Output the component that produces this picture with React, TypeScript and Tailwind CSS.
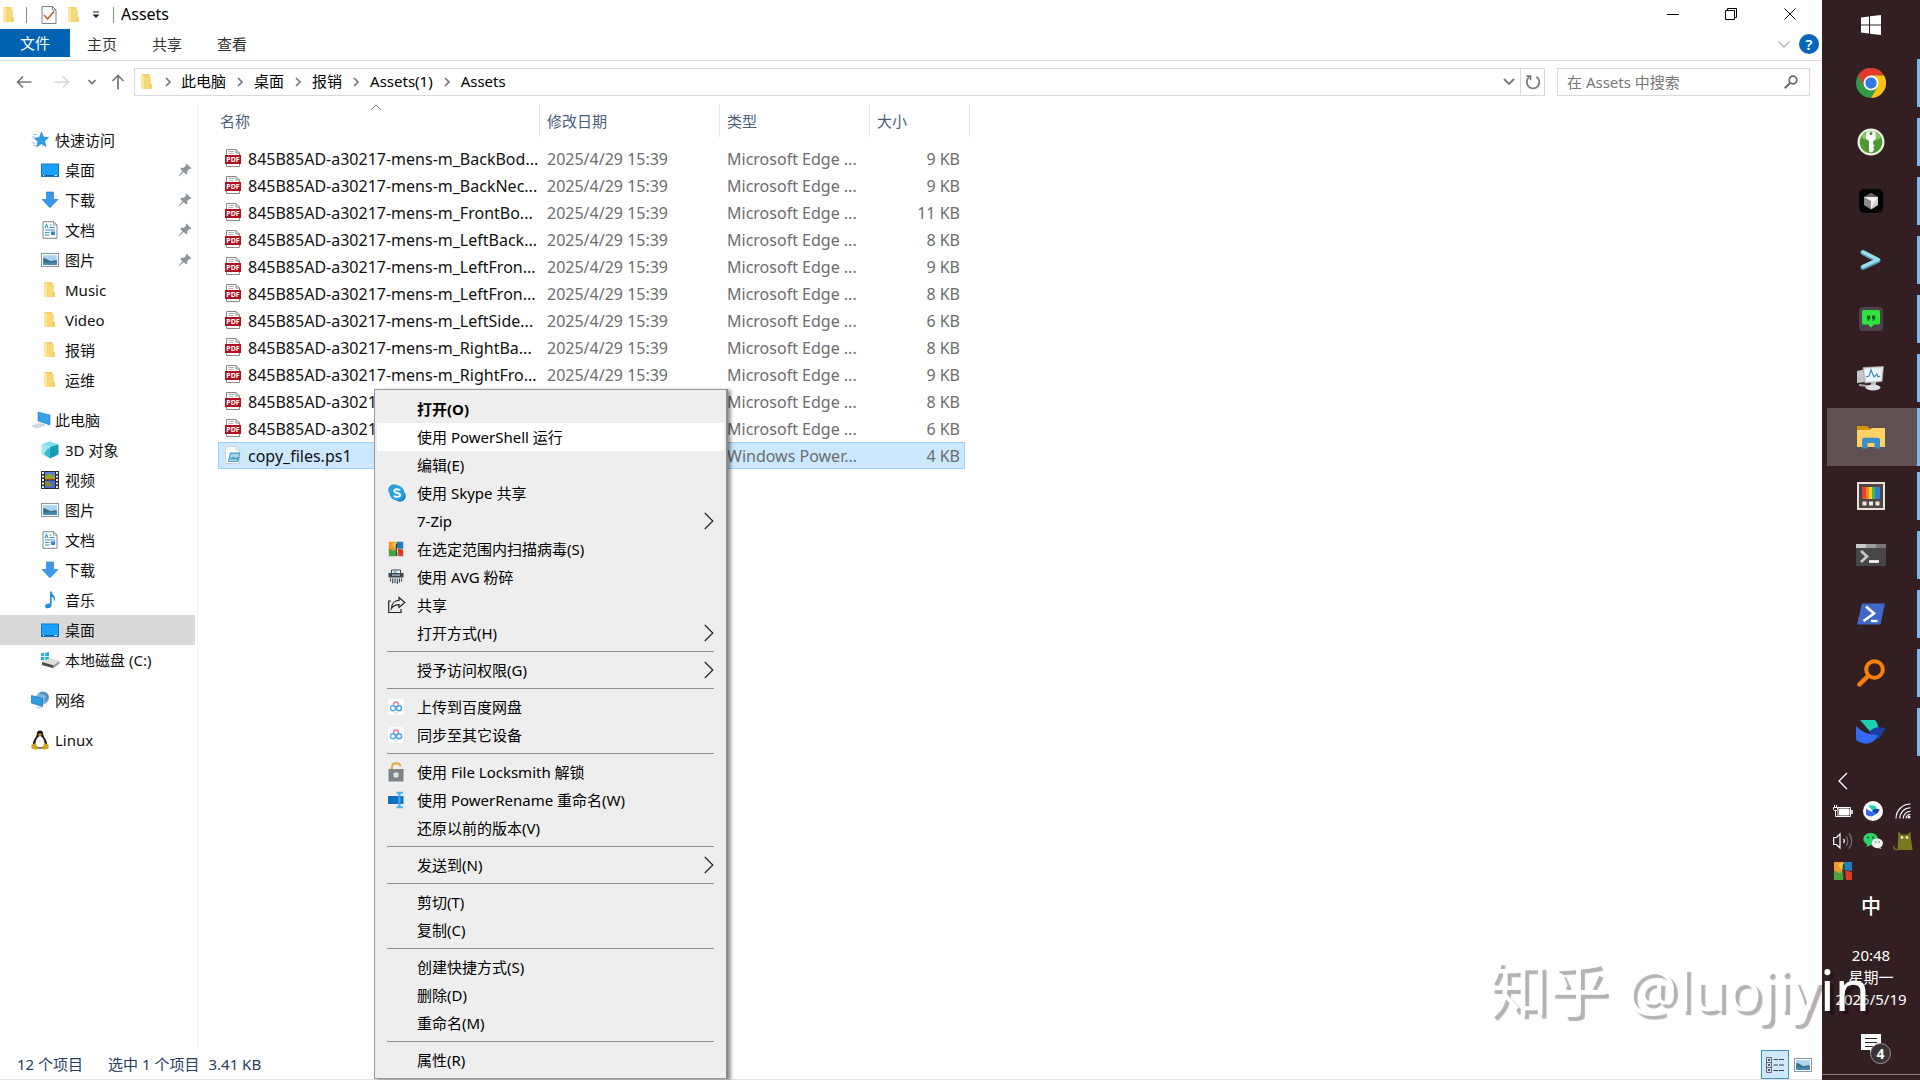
import React from 'react';
import clsx from 'clsx';

type IconProps = { className?: string };

/* ---------- small icons ---------- */

const FolderIcon = ({ className = 'w-[18px] h-[18px]' }: IconProps) => (
  <svg viewBox="0 0 18 18" className={className}>
    <path d="M3 1h8.500v2.500l1 .8V16H5.500L3 15z" fill="#f3cf69" />
    <path d="M3 1l3 1.500v13.700L3 15z" fill="#fbe6a2" />
    <path d="M6 2.500l6.500 1V16H6z" fill="#f8d775" />
    <path d="M11.500 11h2.300v5h-2.300z" fill="#f0ca62" />
  </svg>
);

const StarIcon = () => (
  <svg viewBox="0 0 18 18" className="w-[18px] h-[18px]">
    <path d="M10.500 1l2 5 5 .6-3.900 3.500 1.300 5.400-4.700-2.800-4.500 3.300 1.200-5.600-3.400-3.200 4.900-.7z" fill="#2f9fe8" stroke="#1c7fc6" strokeWidth=".6" />
    <path d="M2 3.500h4M1 6h3M.5 12h4M2 14.500h3" stroke="#7cc6f3" strokeWidth=".9" />
  </svg>
);

const DesktopIcon = () => (
  <svg viewBox="0 0 18 18" className="w-[18px] h-[18px]">
    <rect x=".5" y="3" width="17" height="12.500" fill="#1ba0fb" stroke="#1478c0" />
    <path d="M1 14.500h16" stroke="#0a5fa0" strokeWidth="1" />
    <path d="M2 14.500h1.200M13.500 14.500h2.500" stroke="#fff" strokeWidth="1" />
  </svg>
);

const DownloadIcon = () => (
  <svg viewBox="0 0 18 18" className="w-[18px] h-[18px]">
    <path d="M5.500 1h7v7.500h4.500L9 16.800 1 8.500h4.500z" fill="#3b97ec" stroke="#2d7fd0" strokeWidth=".7" />
  </svg>
);

const DocumentIcon = () => (
  <svg viewBox="0 0 18 18" className="w-[18px] h-[18px]">
    <path d="M2 .7h10.500L16 4v13.300H2z" fill="#fdfdfd" stroke="#7d8890" strokeWidth="1" />
    <path d="M12.500.7V4H16" fill="none" stroke="#7d8890" strokeWidth=".8" />
    <path d="M4 7l1.500-3.500L7 7M8.500 4h2M8.500 6.500h5M4 9h10M4 11.500h4.500M4 14h4.500" fill="none" stroke="#3d94cf" strokeWidth="1.100" />
    <rect x="10" y="10.500" width="4" height="3.500" fill="#2f88c4" />
  </svg>
);

const PictureIcon = () => (
  <svg viewBox="0 0 18 18" className="w-[18px] h-[18px]">
    <rect x=".5" y="2.500" width="17" height="13" fill="#fff" stroke="#8b98a3" />
    <rect x="2.200" y="4.200" width="13.600" height="9.600" fill="#a9d4f2" />
    <path d="M2.200 7c3 0 4 2 6.500 2.700 2.500.6 5-.2 7.100-.7v4.800H2.200z" fill="#3a6f86" />
    <path d="M2.200 11.500c4 .3 9-.8 13.600 0v2.300H2.200z" fill="#4289b6" />
  </svg>
);

const ComputerIcon = () => (
  <svg viewBox="0 0 20 18" className="w-[20px] h-[18px]">
    <path d="M7 1l12 3v10L7 10z" fill="#39a3ea" stroke="#2580bf" strokeWidth=".6" />
    <path d="M1 15l8-2.500 5 1.500-8 3z" fill="#d4dbe3" stroke="#b0b9c5" strokeWidth=".5" />
  </svg>
);

const CubeIcon = () => (
  <svg viewBox="0 0 18 18" className="w-[18px] h-[18px]">
    <path d="M9 .5l8.500 2.700L9 6 .5 3.200z" fill="#7de0ec" />
    <path d="M.5 3.200L9 6v11.500L.5 13.500z" fill="#a4e8ee" />
    <path d="M17.500 3.200L9 6v11.500l8.500-4z" fill="#169db8" />
    <path d="M3 13l4-6 2 1v9.500z" fill="#33bfd0" />
  </svg>
);

const VideoIcon = () => (
  <svg viewBox="0 0 18 18" className="w-[18px] h-[18px]">
    <path d="M0 0h18v18H0z" fill="#2b2b2b" />
    <path d="M2 1v17M16 1v17" stroke="#f2f2f2" strokeWidth="2" strokeDasharray="2 1.500" />
    <path d="M4 1h10v7.500H4z" fill="#5c7fd0" />
    <path d="M4 5l5-2.500L14 6v2.500H4z" fill="#93a42d" />
    <path d="M4 9.500h10V17H4z" fill="#4a6bd4" />
    <path d="M4 10l4 1 3 3-2 2-5-2z" fill="#8a8d2a" />
    <path d="M4 8.500h10" stroke="#a03a2a" strokeWidth="1" />
  </svg>
);

const MusicIcon = () => (
  <svg viewBox="0 0 18 18" className="w-[18px] h-[18px]">
    <path d="M9 .5h1.500c.3 3 4 3.700 3.500 8-.1.900-.7 1.600-1 1.800.3-3-1-4-2.400-4.500V14c0 2-1.600 3.200-3.600 3.300-2 .1-3.200-.9-3-2.300.2-1.600 2.200-2.800 5-2.300z" fill="#1f8fe0" />
  </svg>
);

const DiskIcon = () => (
  <svg viewBox="0 0 20 18" className="w-[20px] h-[18px]">
    <path d="M0 2.300l3.300-.5v3.400H0zM4.200 1.700L8 1v4.200H4.200zM0 6h3.300v3.400L0 9zM4.200 6H8v4.200l-3.800-.6z" fill="#22b0d6" />
    <path d="M1 11l8-4 9.500 3-6 4.500z" fill="#dcdcdc" />
    <path d="M1 11l11.500 3.200v3L1 14z" fill="#4d4d4d" />
    <path d="M12.500 14.200l6-4.200v2.500l-6 4.700z" fill="#9b9b9b" />
  </svg>
);

const NetworkIcon = () => (
  <svg viewBox="0 0 18 18" className="w-[18px] h-[18px]">
    <circle cx="11.500" cy="7" r="6.500" fill="#7fb6dd" />
    <path d="M8 2c3 2 6 1 7 3 .5 2-2 3-1 6 2-1 4-4 3.500-6.500C16.500 1.500 12-.5 8 2z" fill="#4c8fc4" />
    <path d="M.5 4.500l11 3v8L.5 12z" fill="#2f9de6" stroke="#1c6fae" strokeWidth=".7" />
    <path d="M4 16l5-.5 3 1.500-5 .8z" fill="#c2dcef" />
  </svg>
);

const TuxIcon = () => (
  <svg viewBox="0 0 18 20" className="w-[18px] h-[20px]">
    <path d="M9 .5c2.500 0 3.300 1.700 3.300 4 0 2.500 4 5.500 3.700 9.500-.3 3-2 4.500-7 4.500s-6.700-1.500-7-4.500C1.700 10 5.700 7 5.700 4.500 5.700 2.200 6.500.5 9 .5z" fill="#1e1a18" />
    <path d="M9 6c1.800 0 4.500 4 4.500 7.500 0 2.500-2 4-4.500 4s-4.500-1.500-4.500-4C4.500 10 7.200 6 9 6z" fill="#fff" />
    <path d="M6.800 4.300L9 3.500l2.200.8L9 6.300z" fill="#d9a323" />
    <path d="M.5 14.500l3.700-1.200 3 4.700-1.500 1.800L.4 18.500zM17.500 14.500l-3.700-1.200-3 4.700 1.500 1.800 5.300-1.300z" fill="#cfa01a" />
  </svg>
);

const PinIcon = () => (
  <svg viewBox="0 0 14 14" className="w-[14px] h-[14px]">
    <path d="M8.500.5l5 5-1.300.6-.9-.2-2 2 .1 2.600-1.200 1-2.500-2.600L1 13.500l-.5-.5 4-4.800L2.300 5.900l1-1.200 2.700.1 2-2-.2-1z" fill="#8d959c" />
  </svg>
);

const PdfIcon = () => (
  <svg viewBox="0 0 16 18" className="w-[16px] h-[18px] shrink-0 mb-[2px]" role="img" aria-label="PDF">
    <path d="M1.500.5H11L14.500 4v13.500h-13z" fill="#fff" stroke="#8a8a8a" />
    <path d="M11 .5V4h3.500" fill="none" stroke="#8a8a8a" />
    <path d="M3.500 2.500H9M3.500 4.500h5" stroke="#b5b5b5" />
    <rect x="0" y="6" width="16" height="9" fill="#b40f20" />
    <text x="8" y="13" fontSize="7" fontWeight="700" fontFamily="Noto Sans, sans-serif" fill="#fff" textAnchor="middle">PDF</text>
  </svg>
);

const ScriptIcon = () => (
  <svg viewBox="0 0 16 18" className="w-[16px] h-[18px] shrink-0 mb-[2px]">
    <path d="M.5.500H11L14.500 4v13.500H.5z" fill="#fff" stroke="#c9d2da" />
    <path d="M11 .5V4h3.500" fill="#eef3f7" stroke="#c9d2da" />
    <path d="M5 6.500h10.500l-2.200 9.500H2.700z" fill="#4ba3cf" />
    <path d="M5.600 8h8.500l-.7 3-3 1-2-1.500-3.500 2z" fill="#a9d6ea" />
    <path d="M4 14.200h8" stroke="#e9f5fb" />
  </svg>
);

const ChevronRight = ({ className = 'w-[8px] h-[10px]' }: IconProps) => (
  <svg viewBox="0 0 8 10" className={className} fill="none" stroke="#777" strokeWidth="1.700">
    <path d="M2 1l4 4-4 4" />
  </svg>
);

/* ---------- context menu icons ---------- */

const SkypeIcon = () => (
  <svg viewBox="0 0 18 18" className="w-[18px] h-[18px]">
    <circle cx="6" cy="6" r="5.800" fill="#2b9fe0" />
    <circle cx="12" cy="12" r="5.800" fill="#1b84cb" />
    <circle cx="9" cy="9" r="7.500" fill="#28a0e4" />
    <path d="M12 6.300C11 4.800 6.300 4.600 6.300 7c0 2.700 5.700 1.300 5.700 4 0 2.300-4.800 2.500-6 .5" fill="none" stroke="#fff" strokeWidth="1.900" />
  </svg>
);

const AvgIcon = ({ className = 'w-[16px] h-[16px]' }: IconProps) => (
  <svg viewBox="0 0 20 20" className={className}>
    <path d="M1 1h10L9 12l-8 1z" fill="#f09a2c" />
    <path d="M1 9l5 3 4-1v8H1z" fill="#4ea03f" />
    <path d="M11 1h8v9l-8-1z" fill="#1e7fc4" />
    <path d="M12 9.500l7 1.500v8h-6z" fill="#dc3a21" />
    <path d="M9.500 4l2.500-1-1 9 1 6-2 1z" fill="#1f4f38" />
    <path d="M5 4l5-3-1 8z" fill="#f6c34b" />
  </svg>
);

const ShredIcon = () => (
  <svg viewBox="0 0 16 16" className="w-[16px] h-[16px]">
    <path d="M3.500 1h9v4h-9z" fill="#fff" stroke="#39434d" />
    <path d="M.5 4h15v4.500H.5z" fill="#39434d" />
    <path d="M5 3h4" stroke="#2a7fd0" />
    <path d="M4 6h8" stroke="#dfe6ec" />
    <path d="M2.500 9.500v3M4.700 9.500v5M7 9.500v4.500M9.300 9.500V15M11.500 9.500v4M13.600 9.500v3" stroke="#39434d" strokeWidth="1.100" />
  </svg>
);

const ShareIcon = () => (
  <svg viewBox="0 0 18 18" className="w-[18px] h-[18px]" fill="none" stroke="#222" strokeWidth="1.200">
    <path d="M3 5H.7v11.500H13V13" />
    <path d="M11 1.500L16.800 6.500l-5.800 5V8.700c-4 0-6 1.500-7.700 4C3.500 8 6.500 4.600 11 4.400z" />
  </svg>
);

const BaiduIcon = () => (
  <svg viewBox="0 0 16 16" className="w-[16px] h-[16px]" fill="none" strokeWidth="1.500">
    <rect width="16" height="16" rx="3" fill="#fbfdff" />
    <circle cx="8" cy="5.500" r="2.400" stroke="#e87b98" />
    <circle cx="5" cy="9.300" r="2.500" stroke="#5bb5ec" />
    <circle cx="11" cy="9.300" r="2.500" stroke="#4aa4e8" />
    <path d="M6 14h4" stroke="#b9dcf4" strokeWidth="1" />
  </svg>
);

const LockIcon = () => (
  <svg viewBox="0 0 16 20" className="w-[16px] h-[20px]">
    <path d="M4 7V4.500C4 2.500 5.500 1.200 8 1.200s4.500 1.300 4.500 3.300" fill="none" stroke="#e3a73b" strokeWidth="2" />
    <rect x=".5" y="7" width="15" height="12.500" fill="#7e8388" />
    <rect x="5.500" y="10.500" width="5" height="5" rx="1" fill="#dce1e6" />
  </svg>
);

const RenameIcon = () => (
  <svg viewBox="0 0 18 18" className="w-[18px] h-[18px]">
    <rect x="0" y="5" width="15.500" height="8" fill="#1273c4" />
    <path d="M11.500 2v14M8.500 1.700H15M8.500 16.300H15" stroke="#3fb2f0" strokeWidth="2" />
  </svg>
);

/* ---------- taskbar icons ---------- */

const ChromeIcon = () => (
  <svg viewBox="0 0 30 30" className="w-[30px] h-[30px]">
    <circle cx="15" cy="15" r="15" fill="#2f9a48" />
    <path d="M2 7.500A15 15 0 0 1 28 7.500H15L8.500 18.700z" fill="#e23b2e" />
    <path d="M28 7.500A15 15 0 0 1 15 30l6.500-11.200L15 7.500z" fill="#fbc116" />
    <circle cx="15" cy="15" r="7.500" fill="#fff" />
    <circle cx="15" cy="15" r="5.700" fill="#3577e5" />
  </svg>
);

const KeyIcon = () => (
  <svg viewBox="0 0 28 28" className="w-[28px] h-[28px]">
    <circle cx="14" cy="14" r="13.500" fill="#eaf3e2" />
    <circle cx="14" cy="14" r="11.300" fill="#4d9a33" />
    <path d="M4 9a11.300 11.300 0 0 1 20 0c-4 5-14 5-20 0z" fill="#8cc46c" />
    <path d="M9.500 3.500h9v7.500l-2.300 2.300v3l1.300 1.500-1.300 1.700 1 1.500-1.600 3-2.600.5-1-1.500V13L9 10.500z" fill="#fff" />
    <circle cx="14" cy="5.500" r="1.500" fill="#3d8a27" />
  </svg>
);

const CursorIcon = () => (
  <svg viewBox="0 0 24 24" className="w-[24px] h-[24px]">
    <rect width="24" height="24" rx="5" fill="#050505" />
    <path d="M12 4l7 4v8l-7 4.500L5 16V8z" fill="#8a8a8a" />
    <path d="M12 4l7 4H5z" fill="#5f5f5f" />
    <path d="M5 8h14l-7 12.500V12z" fill="#f3f3f3" />
    <path d="M19 8v8l-7 4.500z" fill="#cfcfcf" />
  </svg>
);

const ShellArrowIcon = () => (
  <svg viewBox="0 0 24 24" className="w-[24px] h-[24px]" fill="none" strokeLinecap="round" strokeLinejoin="round">
    <path d="M4 4.500l15 8L4 19.500" stroke="#4f9fba" strokeWidth="5" />
    <path d="M4 4l15 7.500L4 18.500" stroke="#9bdcee" strokeWidth="3.500" />
  </svg>
);

const QuoteIcon = () => (
  <svg viewBox="0 0 24 24" className="w-[24px] h-[24px]">
    <rect width="24" height="24" rx="4" fill="#4b4349" />
    <path d="M4.500 3h15a1.500 1.500 0 0 1 1.500 1.500V16a1.500 1.500 0 0 1-1.500 1.500H15L12 20.500 9 17.500H4.500A1.500 1.500 0 0 1 3 16V4.500A1.500 1.500 0 0 1 4.500 3z" fill="#2fe33f" />
    <path d="M8 8.500h3.300v3L9.500 13.800H8.300l.8-2H8zM13 8.500h3.300v3l-1.800 2.300h-1.200l.8-2H13z" fill="#14591b" />
  </svg>
);

const MonitorIcon = () => (
  <svg viewBox="0 0 30 28" className="w-[30px] h-[28px]">
    <path d="M1 7l9-2v13l-9 1z" fill="#c3c6c9" />
    <path d="M7 3.500l20.500-1-1.500 15-17 1.500z" fill="#dfe2e5" stroke="#9fa4a9" strokeWidth=".8" />
    <path d="M9 5.300l16.500-.8-1.300 11.700-14 1z" fill="#eef6fb" />
    <path d="M10 13l3-1 2-6 3 7 3-3 1 3 2-1" fill="none" stroke="#3a8cc0" strokeWidth="1.200" />
    <path d="M3 20l9 1-1 2-8-1z" fill="#a5a8ab" />
    <path d="M15 18h5v5h-5z" fill="#b2b6ba" />
    <ellipse cx="17" cy="23.500" rx="7.500" ry="3" fill="#dcdfe1" />
  </svg>
);

const ExplorerIcon = () => (
  <svg viewBox="0 0 28 24" className="w-[28px] h-[24px]">
    <path d="M0 1h10l2.500 2.500H28V8H0z" fill="#d6930c" />
    <path d="M0 5h13l2-2h13v19H0z" fill="#fcd364" />
    <path d="M5 23.500V15c0-1.500 1-2.300 2.300-2.300h13.400C22 12.700 23 13.500 23 15v8.500h-5.500V18h-7v5.500z" fill="#3b8fc9" />
  </svg>
);

const PowerToysIcon = () => (
  <svg viewBox="0 0 28 28" className="w-[28px] h-[28px]">
    <rect x="1" y="1" width="26" height="26" fill="#4f4542" stroke="#e6e0d8" strokeWidth="2" />
    <path d="M5 5h4v12H5z" fill="#e8412c" />
    <path d="M9 5h3v12H9z" fill="#f58a1f" />
    <path d="M12 5h3v12h-3z" fill="#f8d22a" />
    <path d="M15 5h3v12h-3z" fill="#4fb847" />
    <path d="M18 5h5v12h-5z" fill="#2a7fd6" />
    <path d="M5.500 19.500h4v4h-4zM12 19.500h4v4h-4zM18.500 19.500h4v4h-4z" fill="#eee8e0" />
  </svg>
);

const TerminalIcon = () => (
  <svg viewBox="0 0 30 22" className="w-[30px] h-[22px]">
    <path d="M0 0h30v22H0z" fill="#474747" />
    <path d="M0 0h10v4H0z" fill="#c9c9c9" />
    <path d="M10 0h10v4H10z" fill="#9b9b9b" />
    <path d="M20 0h10v4H20z" fill="#777" />
    <path d="M5 7l6 5.500L5 18" fill="none" stroke="#c6c6c6" strokeWidth="2.800" />
    <path d="M13 17.500h10" stroke="#fff" strokeWidth="2.600" />
  </svg>
);

const PowerShellIcon = () => (
  <svg viewBox="0 0 28 22" className="w-[28px] h-[22px]">
    <path d="M5 .5h23L23.500 21.500H0z" fill="#3f68c9" />
    <path d="M9 3.500l8 7-10.500 7.500" fill="none" stroke="#fff" strokeWidth="2.600" />
    <path d="M14 18h6.500" stroke="#fff" strokeWidth="2.300" />
  </svg>
);

const EverythingIcon = () => (
  <svg viewBox="0 0 28 28" className="w-[28px] h-[28px]" fill="none" stroke="#f77f0c" strokeLinecap="round">
    <circle cx="17.500" cy="10.500" r="8.300" strokeWidth="4" />
    <path d="M11 17l-8.500 8.500" strokeWidth="4.500" />
  </svg>
);

const LarkIcon = ({ className = 'w-[30px] h-[26px]' }: IconProps) => (
  <svg viewBox="0 0 30 26" className={className}>
    <path d="M4 1h15c2 2 3 5 3.500 8l-8 4z" fill="#1fcdb2" />
    <path d="M13 13c4-5 10-6 16.500-3.500C27 13 25 19 20 20.500z" fill="#1b3f9e" />
    <path d="M0 7c6 6 13 9 22 9-3 7-9 9.500-14 8.500-4-.8-7-2.500-8-4z" fill="#3469f4" />
  </svg>
);

const FONT = "font-['Noto_Sans','Noto_Sans_CJK_SC',sans-serif]";

const files = [
  { name: '845B85AD-a30217-mens-m_BackBod...', size: 9 },
  { name: '845B85AD-a30217-mens-m_BackNec...', size: 9 },
  { name: '845B85AD-a30217-mens-m_FrontBo...', size: 11 },
  { name: '845B85AD-a30217-mens-m_LeftBack...', size: 8 },
  { name: '845B85AD-a30217-mens-m_LeftFron...', size: 9 },
  { name: '845B85AD-a30217-mens-m_LeftFron...', size: 8 },
  { name: '845B85AD-a30217-mens-m_LeftSide...', size: 6 },
  { name: '845B85AD-a30217-mens-m_RightBa...', size: 8 },
  { name: '845B85AD-a30217-mens-m_RightFro...', size: 9 },
  { name: '845B85AD-a30217-mens-m_RightFro...', size: 8 },
  { name: '845B85AD-a30217-mens-m_RightSid...', size: 6 },
];

const quickAccess = [
  { label: '桌面', icon: <DesktopIcon />, pinned: true },
  { label: '下载', icon: <DownloadIcon />, pinned: true },
  { label: '文档', icon: <DocumentIcon />, pinned: true },
  { label: '图片', icon: <PictureIcon />, pinned: true },
  { label: 'Music', icon: <FolderIcon /> },
  { label: 'Video', icon: <FolderIcon /> },
  { label: '报销', icon: <FolderIcon /> },
  { label: '运维', icon: <FolderIcon /> },
];

const thisPc = [
  { label: '3D 对象', icon: <CubeIcon /> },
  { label: '视频', icon: <VideoIcon /> },
  { label: '图片', icon: <PictureIcon /> },
  { label: '文档', icon: <DocumentIcon /> },
  { label: '下载', icon: <DownloadIcon /> },
  { label: '音乐', icon: <MusicIcon /> },
  { label: '桌面', icon: <DesktopIcon />, active: true },
  { label: '本地磁盘 (C:)', icon: <DiskIcon /> },
];

type MenuEntry = { label: string; icon?: React.ReactNode; sub?: boolean; bold?: boolean; active?: boolean };

const menuGroups: MenuEntry[][] = [
  [
    { label: '打开(O)', bold: true },
    { label: '使用 PowerShell 运行', active: true },
    { label: '编辑(E)' },
    { label: '使用 Skype 共享', icon: <SkypeIcon /> },
    { label: '7-Zip', sub: true },
    { label: '在选定范围内扫描病毒(S)', icon: <AvgIcon /> },
    { label: '使用 AVG 粉碎', icon: <ShredIcon /> },
    { label: '共享', icon: <ShareIcon /> },
    { label: '打开方式(H)', sub: true },
  ],
  [{ label: '授予访问权限(G)', sub: true }],
  [
    { label: '上传到百度网盘', icon: <BaiduIcon /> },
    { label: '同步至其它设备', icon: <BaiduIcon /> },
  ],
  [
    { label: '使用 File Locksmith 解锁', icon: <LockIcon /> },
    { label: '使用 PowerRename 重命名(W)', icon: <RenameIcon /> },
    { label: '还原以前的版本(V)' },
  ],
  [{ label: '发送到(N)', sub: true }],
  [{ label: '剪切(T)' }, { label: '复制(C)' }],
  [{ label: '创建快捷方式(S)' }, { label: '删除(D)' }, { label: '重命名(M)' }],
  [{ label: '属性(R)' }],
];

const taskbarApps = [
  { name: 'Chrome', icon: <ChromeIcon /> },
  { name: 'KeePass', icon: <KeyIcon /> },
  { name: 'Cursor', icon: <CursorIcon /> },
  { name: 'Shell', icon: <ShellArrowIcon /> },
  { name: 'Chat', icon: <QuoteIcon /> },
  { name: 'Monitor', icon: <MonitorIcon /> },
  { name: 'Explorer', icon: <ExplorerIcon />, active: true },
  { name: 'PowerToys', icon: <PowerToysIcon /> },
  { name: 'Terminal', icon: <TerminalIcon /> },
  { name: 'PowerShell', icon: <PowerShellIcon /> },
  { name: 'Everything', icon: <EverythingIcon /> },
  { name: 'Lark', icon: <LarkIcon /> },
];

function TitleBar() {
  return (
    <header>
      <div className="flex items-center h-[29px]">
        <FolderIcon />
        <span className="w-px h-4 bg-[#8a8a8a] ml-2" />
        <svg viewBox="0 0 16 18" className="w-[16px] h-[18px] ml-[14px]">
          <path d="M1 .5h10.500L15 4v13.500H1z" fill="#fdfdfd" stroke="#7f7f8c" />
          <path d="M11.500.5V4H15" fill="none" stroke="#7f7f8c" />
          <path d="M3 9l3.500 4L13 5.500" fill="none" stroke="#c8643c" strokeWidth="1.800" />
        </svg>
        <span className="ml-2">
          <FolderIcon />
        </span>
        <svg viewBox="0 0 8 8" className="w-[8px] h-[8px] ml-[9px]">
          <path d="M1 1h6" stroke="#222" />
          <path d="M.5 3.500h7L4 7z" fill="#222" />
        </svg>
        <span className="w-px h-4 bg-[#8a8a8a] ml-[13px]" />
        <h1 className="ml-[7px] text-base leading-7 self-start text-black">Assets</h1>
        <div className="ml-auto flex self-start pr-[2px]">
          <button aria-label="最小化" className="w-[58px] h-7 flex items-center justify-center">
            <svg viewBox="0 0 12 12" className="w-[12px] h-[12px]">
              <path d="M0 6.500h12" stroke="#000" />
            </svg>
          </button>
          <button aria-label="还原" className="w-[58px] h-7 flex items-center justify-center">
            <svg viewBox="0 0 12 12" className="w-[12px] h-[12px]" fill="none" stroke="#000">
              <path d="M.5 2.500h9v9h-9zM2.500 2.500v-2h9v9h-2" />
            </svg>
          </button>
          <button aria-label="关闭" className="w-[60px] h-7 flex items-center justify-center">
            <svg viewBox="0 0 12 12" className="w-[12px] h-[12px]" stroke="#000">
              <path d="M.5.5l11 11M11.500.5l-11 11" />
            </svg>
          </button>
        </div>
      </div>
      <div className="flex items-start h-8 border-b border-[#d9dadb] text-[15px] text-[#333]">
        <button className="w-[70px] h-7 bg-[#0063b1] text-white leading-7">文件</button>
        <button className="w-16 h-7 leading-[30px]">主页</button>
        <button className="w-[66px] h-7 leading-[30px]">共享</button>
        <button className="w-16 h-7 leading-[30px]">查看</button>
        <div className="ml-auto flex items-center gap-[9px] h-[30px] pr-[3px]">
          <svg viewBox="0 0 12 8" className="w-[12px] h-[8px]" fill="none" stroke="#aaa" strokeWidth="1.200">
            <path d="M.5 1.500L6 7l5.500-5.500" />
          </svg>
          <button aria-label="帮助" className="w-5 h-5 rounded-full bg-[#0565b8] text-white text-[15px] leading-5 font-semibold text-center">?</button>
        </div>
      </div>
    </header>
  );
}

function AddressBar() {
  const crumbs = ['此电脑', '桌面', '报销', 'Assets(1)', 'Assets'];
  return (
    <div className="flex items-center h-7 mt-[7px] mr-3 text-[15px] text-black">
      <div className="flex items-center w-[134px] pl-4 shrink-0">
        <button aria-label="后退">
          <svg viewBox="0 0 16 14" className="w-[16px] h-[14px]" fill="none" stroke="#777" strokeWidth="1.700">
            <path d="M15.500 7H1.500M7 1.500L1.500 7 7 12.500" />
          </svg>
        </button>
        <button aria-label="前进" className="ml-[22px]">
          <svg viewBox="0 0 16 14" className="w-[16px] h-[14px]" fill="none" stroke="#d8d8d8" strokeWidth="1.600">
            <path d="M.5 7h14M9 1.500L14.500 7 9 12.500" />
          </svg>
        </button>
        <button aria-label="最近" className="ml-[18px]">
          <svg viewBox="0 0 8 6" className="w-[8px] h-[6px]" fill="none" stroke="#777" strokeWidth="1.700">
            <path d="M.5 1L4 4.500 7.500 1" />
          </svg>
        </button>
        <button aria-label="上移" className="ml-[15px]">
          <svg viewBox="0 0 14 16" className="w-[14px] h-[16px]" fill="none" stroke="#777" strokeWidth="1.700">
            <path d="M7 15.500V1.500M1.500 7L7 1.500 12.500 7" />
          </svg>
        </button>
      </div>
      <nav className="flex flex-1 items-center h-7 border border-[#d9d9d9] pl-[3px]">
        <FolderIcon />
        {crumbs.map((c, i) => (
          <React.Fragment key={c}>
            <ChevronRight className={clsx('w-[8px] h-[10px]', i === 0 ? 'ml-2 mr-[9px]' : 'mx-[10px]')} />
            <a href="#" className="leading-6 pb-[2px]">{c}</a>
          </React.Fragment>
        ))}
        <div className="ml-auto flex items-center h-full">
          <svg viewBox="0 0 12 8" className="w-[12px] h-[8px] mr-[5px]" fill="none" stroke="#777" strokeWidth="1.800">
            <path d="M1 1l5 5 5-5" />
          </svg>
          <button aria-label="刷新" className="w-6 h-full border-l border-[#d9d9d9] flex items-center justify-center">
            <svg viewBox="0 0 16 16" className="w-[16px] h-[16px]" fill="none" stroke="#777" strokeWidth="1.700">
              <path d="M11.500 2.700A6.300 6.300 0 1 1 4 3.200" />
              <path d="M1.500 2.200h4v4" />
            </svg>
          </button>
        </div>
      </nav>
      <label className="flex items-center w-[253px] h-7 ml-3 border border-[#d9d9d9] pl-[9px] pr-[11px]">
        <input
          type="text"
          aria-label="搜索"
          placeholder="在 Assets 中搜索"
          className="flex-1 min-w-0 bg-transparent outline-none placeholder:text-[#767676]"
        />
        <svg viewBox="0 0 14 14" className="w-[14px] h-[14px]" fill="none" stroke="#6a6a6a" strokeWidth="1.700">
          <circle cx="9" cy="5" r="3.800" />
          <path d="M6.300 7.700L.8 13.200" strokeWidth="2.200" />
        </svg>
      </label>
    </div>
  );
}

type NavRowProps = { label: string; icon: React.ReactNode; root?: boolean; pinned?: boolean; active?: boolean };

function NavRow({ label, icon, root, pinned, active }: NavRowProps) {
  return (
    <li className={clsx('flex items-center h-[30px] mr-[2px] pr-[3px]', root ? 'pl-[31px]' : 'pl-[41px]', active && 'bg-[#d9d9d9]')}>
      <span className="w-6 shrink-0">{icon}</span>
      <a href="#" className="whitespace-nowrap">{label}</a>
      {pinned && (
        <span className="ml-auto">
          <PinIcon />
        </span>
      )}
    </li>
  );
}

function Sidebar() {
  return (
    <aside className="w-[198px] shrink-0 border-r border-[#f3f3f3] pt-[21px] text-[15px] text-[#111]">
      <ul>
        <NavRow label="快速访问" icon={<StarIcon />} root />
        {quickAccess.map((item) => (
          <NavRow key={item.label} {...item} />
        ))}
      </ul>
      <ul className="mt-[10px]">
        <NavRow label="此电脑" icon={<ComputerIcon />} root />
        {thisPc.map((item) => (
          <NavRow key={item.label} {...item} />
        ))}
      </ul>
      <ul className="mt-[10px] flex flex-col gap-[10px]">
        <NavRow label="网络" icon={<NetworkIcon />} root />
        <NavRow label="Linux" icon={<TuxIcon />} root />
      </ul>
    </aside>
  );
}

function FileTable() {
  const th = 'relative h-[33px] border-r border-[#e5e5e5] font-normal text-left text-[15px] text-[#4c607a] p-0 pt-[2px]';
  const td = 'p-0 pt-[2px] leading-[25px]';
  const sel = 'bg-[#cce8ff] border-y border-[#99d1ff]';
  return (
    <table className="ml-5 w-[752px] table-fixed border-separate border-spacing-0 text-base text-[#6d6d6d]">
      <colgroup>
        <col className="w-[322px]" />
        <col className="w-[180px]" />
        <col className="w-[150px]" />
        <col className="w-[100px]" />
      </colgroup>
      <thead>
        <tr>
          <th className={clsx(th, 'pl-[2px]')}>
            名称
            <svg viewBox="0 0 10 6" className="absolute left-[153px] top-0 w-[10px] h-[6px]" fill="none" stroke="#777">
              <path d="M.5 5.500L5 1l4.500 4.500" />
            </svg>
          </th>
          <th className={clsx(th, 'pl-[7px]')}>修改日期</th>
          <th className={clsx(th, 'pl-[7px]')}>类型</th>
          <th className={clsx(th, 'pl-[7px]')}>大小</th>
        </tr>
        <tr className="h-2" />
      </thead>
      <tbody>
        {files.map((f, i) => (
          <tr key={i} className="h-[27px] whitespace-nowrap">
            <td className="p-0 pl-[7px] text-[#111]">
              <div className="flex items-center gap-[7px]">
                <PdfIcon />
                <span className="pt-[2px] leading-[25px]">{f.name}</span>
              </div>
            </td>
            <td className={clsx(td, 'pl-[7px]')}>2025/4/29 15:39</td>
            <td className={clsx(td, 'pl-[7px]')}>Microsoft Edge ...</td>
            <td className={clsx(td, 'pr-[10px] text-right')}>{f.size} KB</td>
          </tr>
        ))}
        <tr className="h-[27px] whitespace-nowrap leading-[23px]">
          <td className={clsx(sel, 'p-0 pl-[6px] border-l text-[#111]')}>
            <div className="flex items-center gap-[7px]">
              <ScriptIcon />
              <span className="pt-[2px]">copy_files.ps1</span>
            </div>
          </td>
          <td className={clsx(sel, 'p-0 pt-[2px] pl-[7px]')}>2025/4/29 15:39</td>
          <td className={clsx(sel, 'p-0 pt-[2px] pl-[7px]')}>Windows Power...</td>
          <td className="p-0 pr-[5px]">
            <div className={clsx(sel, 'border-r pt-[2px] pr-1 text-right')}>4 KB</div>
          </td>
        </tr>
      </tbody>
    </table>
  );
}

function StatusBar() {
  return (
    <footer className="flex h-[30px] pl-[17px] pr-[10px] border-b border-[#e3e3e3] text-[15px] leading-7 text-[#26405f]">
      <span>12 个项目</span>
      <span className="ml-[25px]">选中 1 个项目</span>
      <span className="ml-[9px]">3.41 KB</span>
      <div className="ml-auto flex items-center gap-[5px]">
        <button aria-label="详细信息" className="w-7 h-[29px] bg-[#cbe9f9] border border-[#3a96bd] flex items-center justify-center">
          <svg viewBox="0 0 18 16" className="w-[18px] h-[16px]" fill="none">
            <path d="M.5.5h5v15h-5zM.5 5.500h5M.5 10.500h5" stroke="#667" />
            <path d="M2 3h2M2 8h2M2 13h2" stroke="#223" strokeWidth="1.500" />
            <path d="M7.500 2.500h4.500M13 2.500h5M7.500 8h4.500M13 8h5M7.500 13.500h4.500M13 13.500h5" stroke="#445" />
          </svg>
        </button>
        <button aria-label="大缩略图">
          <PictureIcon />
        </button>
      </div>
    </footer>
  );
}

function ContextMenu() {
  return (
    <div role="menu" className="absolute left-[374px] top-[389px] w-[354px] pt-[5px] pb-1 px-[2px] bg-[#eeeeee] border border-[#979797] border-r-2 border-r-[#8b8b8b] shadow-[3px_1px_3px_rgba(0,0,0,0.4)] text-[15px] text-black">
      {menuGroups.map((group, gi) => (
        <div key={gi}>
          {gi > 0 && <hr className="my-1 mx-[10px] border-t border-[#919191]" />}
          {group.map((item) => (
            <button
              key={item.label}
              role="menuitem"
              className={clsx('flex items-center w-full h-7 pl-2 pr-[10px] text-left', item.active && 'bg-white', item.bold && 'font-bold')}
            >
              <span className="w-8 flex justify-start pl-[3px] shrink-0">{item.icon}</span>
              <span className="whitespace-nowrap">{item.label}</span>
              {item.sub && (
                <svg viewBox="0 0 10 18" className="ml-auto w-[10px] h-[18px]" fill="none" stroke="#222" strokeWidth="1.200">
                  <path d="M.8 1l8 8-8 8" />
                </svg>
              )}
            </button>
          ))}
        </div>
      ))}
    </div>
  );
}

function Tray() {
  return (
    <div className="mt-auto flex flex-col text-white">
      <button aria-label="显示隐藏的图标" className="w-[42px] h-[30px] flex items-center justify-center">
        <svg viewBox="0 0 10 18" className="w-[10px] h-[18px]" fill="none" stroke="#fff" strokeWidth="1.300">
          <path d="M9 1L1 9l8 8" />
        </svg>
      </button>
      <div className="grid grid-cols-3 w-[90px] ml-[6px] auto-rows-[30px] place-items-center">
        <svg viewBox="0 0 20 16" className="w-[20px] h-[16px]" fill="none" stroke="#fff">
          <path d="M5 4.500h12.500v9H5z" />
          <path d="M6.500 6h9.500v6H6.500z" fill="#fff" />
          <path d="M19 7v4" strokeWidth="1.500" />
          <path d="M.5 4.500h4v2l-1 1h-2l-1-1zM1.500 2v2M3.500 2v2M2.500 8v5.500H5" />
        </svg>
        <span className="w-5 h-5 rounded-full bg-white flex items-center justify-center">
          <LarkIcon className="w-[14px] h-[12px]" />
        </span>
        <svg viewBox="0 0 16 16" className="w-[16px] h-[16px]" fill="none" stroke="#fff" strokeWidth="1.100">
          <path d="M1 15.500A14.500 14.500 0 0 1 15.500 1M4.800 15.500A10.700 10.700 0 0 1 15.500 4.800M8.300 15.500a7.200 7.200 0 0 1 7.200-7.200M11 15.500a4.500 4.500 0 0 1 4.500-4.300" />
          <circle cx="14" cy="14" r="1.500" fill="#fff" stroke="none" />
        </svg>
        <svg viewBox="0 0 20 18" className="w-[20px] h-[18px]" fill="none" stroke="#fff" strokeWidth="1.200">
          <path d="M.7 5.500h2.800L7 2v14l-3.500-3.500H.7z" />
          <path d="M10.500 7a3 3 0 0 1 0 4" />
          <path d="M13 4.500a6.500 6.500 0 0 1 0 9M15.800 1.500a11 11 0 0 1 0 15" stroke="#7d7071" />
        </svg>
        <svg viewBox="0 0 20 18" className="w-[20px] h-[18px]">
          <path d="M7.500 1C12 1 15 3.700 15 7.200S12 13.300 7.500 13.300L3.500 15l.6-2.800C1.600 11 .3 9.300.3 7.200.3 3.700 3.500 1 7.500 1z" fill="#2fd166" />
          <ellipse cx="14.300" cy="11.300" rx="5.600" ry="4.900" fill="#f1f1f1" />
          <path d="M17 15l1.500 2-3.500-1z" fill="#f1f1f1" />
          <circle cx="5" cy="5.500" r="1" fill="#14592c" />
          <circle cx="10" cy="5.500" r="1" fill="#14592c" />
          <circle cx="12.500" cy="10" r=".8" fill="#777" />
          <circle cx="16" cy="10" r=".8" fill="#777" />
        </svg>
        <svg viewBox="0 0 20 20" className="w-[20px] h-[20px]">
          <path d="M5.500.5l3 3h6l3-3 .5 8 1.700 10.500H4.500z" fill="#77791d" />
          <path d="M5 18.500c-4 .7-5.500-2-3.500-3.500" fill="none" stroke="#77791d" strokeWidth="1.300" />
          <circle cx="9" cy="6.500" r="1.400" fill="#e8e6c8" />
          <circle cx="14" cy="6.500" r="1.400" fill="#e8e6c8" />
        </svg>
        <AvgIcon className="w-[20px] h-[20px]" />
      </div>
      <button className="h-[42px] text-[20px] leading-[42px] font-medium">中</button>
      <time className="mt-4 text-[15px] leading-[22px] text-center">
        20:48
        <br />
        星期一
        <br />
        2025/5/19
      </time>
      <button aria-label="通知" className="relative self-center w-5 h-5 mt-6 mb-5">
        <svg viewBox="0 0 20 20" className="w-[20px] h-[20px]">
          <path d="M0 0h20v16h-6l-5 4v-4H0z" fill="#fff" />
          <path d="M4 4.500h12M4 8.500h12M4 12.500h8" stroke="#321f22" strokeWidth="1.200" />
        </svg>
        <span className="absolute left-[9px] top-[9px] w-[21px] h-[21px] rounded-full bg-[#3b3335] border border-[#9b9394] text-[14px] leading-[19px] font-bold text-center">4</span>
      </button>
      <div className="border-t border-[#8b8283] h-[6px]" />
    </div>
  );
}

function Taskbar() {
  return (
    <aside className="w-[98px] shrink-0 min-h-screen flex flex-col bg-[#331f22]">
      <button aria-label="开始" className="h-[50px] mb-1 flex items-center justify-center">
        <svg viewBox="0 0 20 20" className="w-[20px] h-[20px]" fill="#fff">
          <path d="M0 2.500l8-1.100v8.100H0zM9 1.200L20 0v9.500H9zM0 10.500h8v8.100l-8-1.100zM9 10.500h11V20l-11-1.200z" />
        </svg>
      </button>
      <div className="flex flex-col gap-px">
        {taskbarApps.map((app) => (
          <button
            key={app.name}
            aria-label={app.name}
            className={clsx('h-[58px] flex items-center justify-end', app.active && 'ml-[5px] bg-[#5f5051]')}
          >
            <span className="flex-1 flex justify-center">
              <span className={clsx(app.active && 'mr-[5px]')}>{app.icon}</span>
            </span>
            <span className={clsx('w-[3px] -ml-[3px] bg-[#76b9ed]', app.active ? 'h-full' : 'h-12')} />
          </button>
        ))}
      </div>
      <Tray />
    </aside>
  );
}

export default function App() {
  return (
    <main className={clsx('relative flex min-h-screen bg-white overflow-hidden', FONT)}>
      <section className="flex-1 min-w-0 flex flex-col">
        <TitleBar />
        <AddressBar />
        <div className="flex flex-1 mt-2">
          <Sidebar />
          <div className="flex-1 min-w-0">
            <FileTable />
          </div>
        </div>
        <StatusBar />
      </section>

      <Taskbar />
      <ContextMenu />

      {/* Watermark over the bottom right corner */}
      <div className="absolute right-[50px] bottom-[51px] flex items-center gap-[18px] whitespace-nowrap text-white text-[57px] leading-[80px] pointer-events-none [text-shadow:4px_4px_1px_rgba(0,0,0,0.3)]">
        <span className="text-[60px]">知乎</span>
        <span>@luojiyin</span>
      </div>
    </main>
  );
}
